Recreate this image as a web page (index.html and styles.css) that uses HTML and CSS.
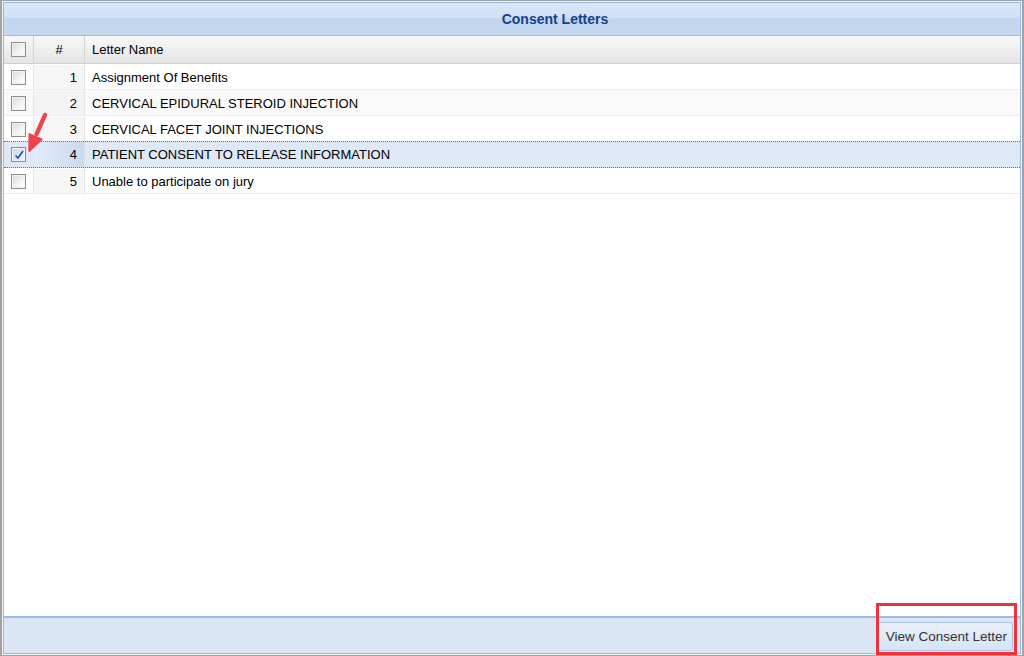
FILE: index.html
```html
<!DOCTYPE html>
<html lang="en">
<head>
    <meta charset="UTF-8">
    <meta name="viewport" content="width=device-width, initial-scale=1.0">
    <title>Consent Letters</title>
    <link rel="stylesheet" href="styles.css">
</head>
<body>
    <div class="window">
        <section class="panel">
            <div class="panel-title">Consent Letters</div>
            <div class="grid">
                <div class="row header">
                    <div class="cell check"><span class="box"></span></div>
                    <div class="cell num head-num">#</div>
                    <div class="cell name">Letter Name</div>
                </div>
                <div class="row">
                    <div class="cell check"><span class="box"></span></div>
                    <div class="cell num">1</div>
                    <div class="cell name">Assignment Of Benefits</div>
                </div>
                <div class="row alt">
                    <div class="cell check"><span class="box"></span></div>
                    <div class="cell num">2</div>
                    <div class="cell name">CERVICAL EPIDURAL STEROID INJECTION</div>
                </div>
                <div class="row">
                    <div class="cell check"><span class="box"></span></div>
                    <div class="cell num">3</div>
                    <div class="cell name">CERVICAL FACET JOINT INJECTIONS</div>
                </div>
                <div class="row selected">
                    <div class="cell check"><span class="box checked">
                        <svg width="12" height="12" viewBox="0 0 12 12"><path d="M2.5 6.5 L5 9 L10 2" fill="none" stroke="#2a4fa0" stroke-width="1.7"/></svg>
                    </span></div>
                    <div class="cell num">4</div>
                    <div class="cell name">PATIENT CONSENT TO RELEASE INFORMATION</div>
                </div>
                <div class="row">
                    <div class="cell check"><span class="box"></span></div>
                    <div class="cell num">5</div>
                    <div class="cell name">Unable to participate on jury</div>
                </div>
            </div>
            <div class="toolbar">
                <button class="btn">View Consent Letter</button>
            </div>
        </section>

        <svg class="arrow" width="34" height="50" viewBox="0 0 30 44">
            <path d="M23 6 L15.5 23" stroke="#f0434d" stroke-width="3.8" stroke-linecap="round"/>
            <path d="M9 38 L9.1 22.8 L20.1 27.6 Z" fill="#f0434d" stroke="#f0434d" stroke-width="1.5" stroke-linejoin="round"/>
        </svg>
        <div class="highlight"></div>
    </div>
</body>
</html>
```

FILE: styles.css
```css
body {
    margin: 0;
    background: #ffffff;
    font-family: "Liberation Sans", Arial, sans-serif;
    font-size: 13px;
    color: #000;
}
.window {
    position: relative;
    height: 656px;
    box-sizing: border-box;
    border: 1px solid #a3a3a3;
    border-left-width: 2px;
    border-right-width: 2px;
    padding: 1px;
    background: #f2f2f2;
}
.panel {
    height: 100%;
    box-sizing: border-box;
    border: 1px solid #99bbe8;
    display: flex;
    flex-direction: column;
    background: #fff;
}
.panel-title {
    height: 32px;
    line-height: 33px;
    padding-left: 86px;
    text-align: center;
    font-weight: bold;
    font-size: 14px;
    color: #15428b;
    background: linear-gradient(#dbe7f7, #d0e0f5 45%, #c1d5f0 50%, #c6d9f2);
    border-bottom: 1px solid #99bbe8;
}
.grid {
    flex: 1;
    background: #fff;
}
.row {
    display: flex;
    height: 26px;
    box-sizing: border-box;
    border-bottom: 1px solid #ededed;
    align-items: stretch;
    padding-top: 1px;
}
.row.alt {
    background: #fafafa;
}
.row.header {
    height: 28px;
    padding-top: 0;
    background: linear-gradient(#f9f9f9, #e4e4e4);
    border-bottom: 1px solid #d0d0d0;
}
.row.selected {
    background: #dfe8f6;
    border-top: 1px dotted #6b6b6b;
    border-bottom: 1px dotted #6b6b6b;
    margin-top: -1px;
    height: 27px;
    padding-top: 0;
}
.cell {
    display: flex;
    align-items: center;
    box-sizing: border-box;
}
.check {
    width: 30px;
    justify-content: center;
    border-right: 1px solid #e6e6e6;
}
.num {
    width: 51px;
    justify-content: flex-end;
    padding-right: 7px;
    background: #f6f6f6;
    border-right: 1px solid #e3e3e3;
}
.row.alt .num {
    background: #f3f3f3;
}
.row.selected .num {
    background: linear-gradient(to right, #e3ebf7, #c9daf1);
}
.row.selected .check {
    background: #dfe8f6;
}
.header .check,
.header .num {
    background: transparent;
    border-right: 1px solid #d3d3d3;
}
.head-num {
    justify-content: center;
    padding-right: 0;
}
.name {
    padding-left: 7px;
    flex: 1;
}
.box {
    width: 15px;
    height: 15px;
    box-sizing: border-box;
    border: 1px solid #8f8f8f;
    background: linear-gradient(135deg, #d8d8d8, #f4f4f4 60%, #ffffff);
    box-shadow: inset 0 0 0 1px #f2f2f2;
    display: flex;
    align-items: center;
    justify-content: center;
}
.box.checked {
    background: linear-gradient(135deg, #cbd6e9, #eef2f9);
}
.toolbar {
    height: 37px;
    box-sizing: border-box;
    border-top: 2px solid #99bbe8;
    background: #dae6f4;
    display: flex;
    justify-content: flex-end;
    align-items: center;
    padding-right: 7px;
}
.btn {
    height: 29px;
    padding: 0 5px 0 8px;
    font-family: "Liberation Sans", Arial, sans-serif;
    font-size: 13.5px;
    color: #333;
    border: 1px solid #a9c3e6;
    border-radius: 3px;
    background: linear-gradient(#e9f0fa, #d6e3f4);
    margin-top: 2px;
}
.arrow {
    position: absolute;
    left: 17px;
    top: 107px;
}
.highlight {
    position: absolute;
    left: 874px;
    top: 602px;
    width: 141px;
    height: 52px;
    box-sizing: border-box;
    border: 3px solid #f0303a;
}
```
